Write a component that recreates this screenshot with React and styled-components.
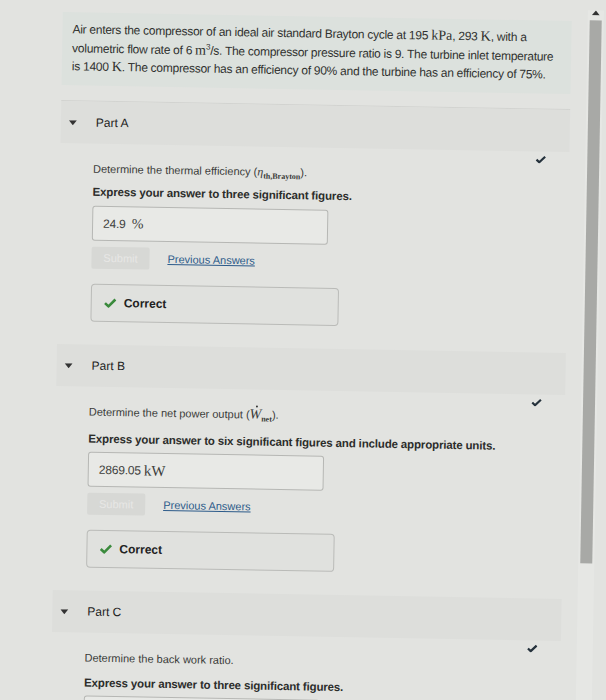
import React from "react";
import styled, { createGlobalStyle } from "styled-components";

const GlobalStyle = createGlobalStyle`
  html, body {
    margin: 0;
    padding: 0;
    background: #e2e3e0;
    overflow: hidden;
  }
`;

const Page = styled.div`
  display: flex;
  width: 606px;
  height: 760px;
  transform: rotate(1deg);
  transform-origin: 0 0;
  font-family: "Liberation Sans", Arial, sans-serif;
  color: #30312f;
`;

const Main = styled.main`
  width: 509px;
  margin-left: 63px;
`;

const ProblemBox = styled.section`
  margin-top: 11px;
  height: 73px;
  box-sizing: border-box;
  padding: 8px 10px;
  background: #dce1dd;
  font-size: 12px;
  letter-spacing: -0.27px;
  line-height: 18.5px;
  white-space: nowrap;
`;

const Serif = styled.span`
  font-family: "Liberation Serif", "Times New Roman", serif;
  font-size: ${(p) => p.size || 14}px;
  font-style: ${(p) => (p.italic ? "italic" : "normal")};
  letter-spacing: 0;
  line-height: 0;
`;

const PartList = styled.div`
  margin-top: 15px;
  border-top: 1px solid #d2d3d0;
`;

const PartHeader = styled.div`
  display: flex;
  align-items: center;
  gap: 19px;
  height: 42px;
  padding-left: 8px;
  background: #dddedb;
  font-size: 12px;
  color: #222;
`;

const PartBody = styled.div`
  position: relative;
  padding: 16px 0 23px 33px;
`;

const Status = styled.span`
  position: absolute;
  top: -2px;
  right: 23px;
`;

const Prompt = styled.p`
  margin: 0 0 ${(p) => p.gap || 6}px;
  font-size: 11px;
  line-height: 18px;
  color: #3a3b39;
`;

const Instruction = styled.p`
  margin: 0 0 ${(p) => p.gap || 4}px;
  font-size: 11.5px;
  letter-spacing: -0.15px;
  line-height: 18px;
  font-weight: 700;
  color: #2c2d2b;
`;

const AnswerBox = styled.div`
  display: flex;
  align-items: center;
  width: 236px;
  height: 35px;
  box-sizing: border-box;
  padding-left: 10px;
  border: 1px solid #b6b7b4;
  border-radius: 3px;
  background: #e8e9e6;
  font-size: 12px;
  letter-spacing: -0.2px;
  color: #3d3e3c;
`;

const SubmitRow = styled.div`
  display: flex;
  align-items: center;
  gap: 18px;
  margin-top: 6px;
`;

const SubmitButton = styled.button`
  width: 58px;
  height: 22px;
  border: none;
  border-radius: 2px;
  background: #d7d8d5;
  color: #e7e7e5;
  font-family: inherit;
  font-size: 11px;
  padding: 0;
`;

const PrevLink = styled.a`
  color: #2d5b8a;
  font-size: 11px;
  text-decoration: underline;
  cursor: pointer;
`;

const CorrectBox = styled.div`
  display: flex;
  align-items: center;
  gap: 7px;
  width: 248px;
  height: 38px;
  box-sizing: border-box;
  margin-top: 15px;
  padding-left: 12px;
  border: 1px solid #babbb8;
  border-radius: 4px;
  background: #e0e1de;
  font-size: 12px;
  font-weight: 700;
  color: #222;
`;

const Dotted = styled.span`
  position: relative;
  display: inline-block;
  line-height: 12px;
  &::before {
    content: "";
    position: absolute;
    top: -3px;
    left: 55%;
    width: 2px;
    height: 2px;
    border-radius: 50%;
    background: #333;
  }
`;

const Sub = styled.sub`
  font-family: "Liberation Serif", serif;
  font-size: 8px;
  font-weight: 700;
  line-height: 0;
  vertical-align: -3px;
`;

const Sup = styled.sup`
  font-size: 8px;
  line-height: 0;
`;

const Scroll = styled.div`
  display: flex;
  flex-direction: column;
  align-items: center;
  width: 16px;
  margin-left: 16px;
  background: #e6e7e4;
`;

const Thumb = styled.div`
  width: 12px;
  height: 543px;
  margin-top: 5px;
  background: #a8a9a6;
`;

const Caret = ({ up }) => (
  <svg width="8" height="5" viewBox="0 0 8 5" style={up ? { transform: "rotate(180deg)" } : undefined}>
    <polygon points="0,0 8,0 4,5" fill="#333" />
  </svg>
);

const DoneMark = () => (
  <svg width="11" height="8" viewBox="0 0 11 8">
    <path d="M1.2 4.2 L4 6.8 L9.8 1.2" fill="none" stroke="#25323c" strokeWidth="2.2" />
  </svg>
);

const GreenCheck = () => (
  <svg width="13" height="10" viewBox="0 0 13 10">
    <path d="M1.3 5.2 L4.8 8.4 L11.6 1.4" fill="none" stroke="#3a8a3c" strokeWidth="2.6" />
  </svg>
);

const Part = ({ label, prompt, promptGap, instructionGap, instruction, answer, reviewed = true }) => (
  <div>
    <PartHeader>
      <Caret />
      <span>{label}</span>
    </PartHeader>
    <PartBody>
      <Status>
        <DoneMark />
      </Status>
      <Prompt gap={promptGap}>{prompt}</Prompt>
      <Instruction gap={instructionGap}>{instruction}</Instruction>
      <AnswerBox>{answer}</AnswerBox>
      {reviewed && (
        <>
          <SubmitRow>
            <SubmitButton disabled>Submit</SubmitButton>
            <PrevLink>Previous Answers</PrevLink>
          </SubmitRow>
          <CorrectBox>
            <GreenCheck />
            Correct
          </CorrectBox>
        </>
      )}
    </PartBody>
  </div>
);

export default function App() {
  return (
    <>
      <GlobalStyle />
      <Page>
        <Main>
          <ProblemBox>
            Air enters the compressor of an ideal air standard Brayton cycle at 195 <Serif>kPa</Serif>, 293{" "}
            <Serif>K</Serif>, with a
            <br />
            volumetric flow rate of 6 <Serif>m</Serif>
            <Sup>3</Sup>/s. The compressor pressure ratio is 9. The turbine inlet temperature
            <br />
            is 1400 <Serif>K</Serif>. The compressor has an efficiency of 90% and the turbine has an efficiency of
            75%.
          </ProblemBox>
          <PartList>
            <Part
              label="Part A"
              promptGap={5}
              instructionGap={5}
              prompt={
                <>
                  Determine the thermal efficiency (
                  <Serif size={12} italic>
                    η
                  </Serif>
                  <Sub>th,Brayton</Sub>).
                </>
              }
              instruction="Express your answer to three significant figures."
              answer={
                <>
                  24.9&nbsp;&nbsp;<Serif size={14}>%</Serif>
                </>
              }
            />
            <Part
              label="Part B"
              promptGap={9}
              prompt={
                <>
                  Determine the net power output (
                  <Serif size={14} italic>
                    <Dotted>W</Dotted>
                  </Serif>
                  <Sub>net</Sub>).
                </>
              }
              instruction="Express your answer to six significant figures and include appropriate units."
              answer={
                <>
                  2869.05&nbsp;<Serif size={15}>kW</Serif>
                </>
              }
            />
            <Part
              label="Part C"
              prompt="Determine the back work ratio."
              promptGap={7}
              instruction="Express your answer to three significant figures."
              answer=""
              reviewed={false}
            />
          </PartList>
        </Main>
        <Scroll>
          <Caret up />
          <Thumb />
        </Scroll>
      </Page>
    </>
  );
}
